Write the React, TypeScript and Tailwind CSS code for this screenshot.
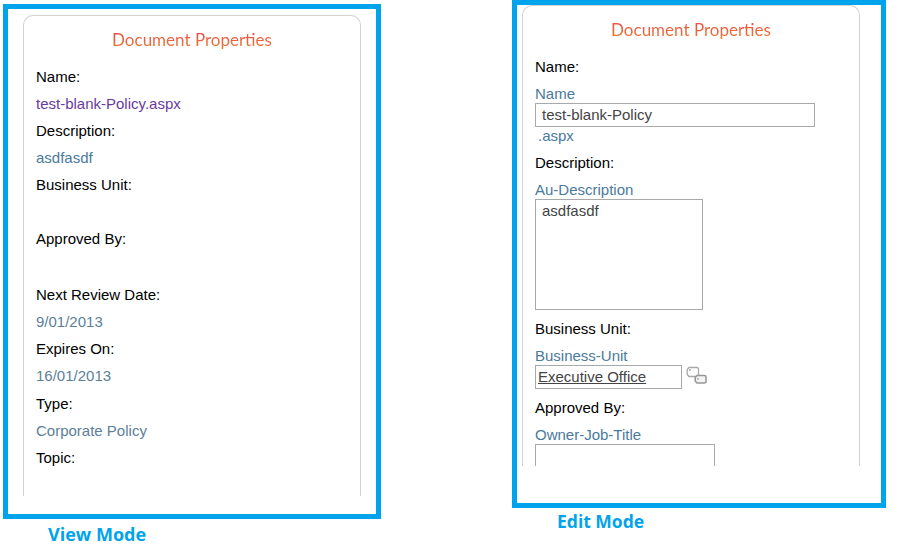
const sans = "font-['Liberation_Sans',Arial,sans-serif]";

function Label({ children }: { children: string }) {
  return <div className="h-[27px] leading-[26px] text-black">{children}</div>;
}

function Value({ children, color = 'text-[#4a7a9c]' }: { children?: string; color?: string }) {
  return <div className={`h-[27px] leading-[26px] ${color}`}>{children}</div>;
}

// caption sits above its field, so the row is shorter than the text line
function Caption({ children }: { children: string }) {
  return <div className="h-[22px] leading-[26px] text-[#4a7a9c]">{children}</div>;
}

function Title() {
  return (
    <h2 className="text-center text-[17px] leading-[24px] font-normal font-['Lato',sans-serif] bg-gradient-to-b from-[#e63f4a] to-[#ee7f22] bg-clip-text text-transparent">
      Document Properties
    </h2>
  );
}

function TagsIcon() {
  return (
    <svg width="21" height="18" viewBox="0 0 21 18" fill="none" className="ml-[4px] mt-[1px]">
      <path d="M3 1.5h8a1.5 1.5 0 0 1 1.5 1.5v6a1.5 1.5 0 0 1-1.5 1.5H3L1.2 8.5V3.5z" stroke="#a8a8a8" strokeWidth="1.3" fill="#fff" />
      <circle cx="4" cy="4" r="1" fill="#a8a8a8" />
      <path d="M11 9.5h7.5a1.5 1.5 0 0 1 1.5 1.5v4.5a1.5 1.5 0 0 1-1.5 1.5H11l-1.8-2v-3.5z" stroke="#989898" strokeWidth="1.6" fill="#f3f3f3" />
      <circle cx="12" cy="13" r="1" fill="#a8a8a8" />
    </svg>
  );
}

function ViewMode() {
  return (
    <div className="ml-[3px] mt-[4px] w-[378px]">
      <div className="h-[515px] border-[5px] border-[#00a4ec] pt-[6px] pl-[15px] bg-white">
        <div className="w-[338px] h-[481px] border border-b-0 border-[#d4d2ce] rounded-t-[10px] pt-[12px] px-[12px]">
          <Title />
          <div className="mt-[12px] text-[15px]">
            <Label>Name:</Label>
            <Value color="text-[#6a3aa0]">test-blank-Policy.aspx</Value>
            <Label>Description:</Label>
            <Value>asdfasdf</Value>
            <Label>Business Unit:</Label>
            <Value />
            <Label>Approved By:</Label>
            <div className="h-[29px]" />
            <Label>Next Review Date:</Label>
            <Value color="text-[#5c7f98]">9/01/2013</Value>
            <Label>Expires On:</Label>
            <Value color="text-[#5c7f98]">16/01/2013</Value>
            <div className="h-[1px]" />
            <Label>Type:</Label>
            <Value color="text-[#5c7f98]">Corporate Policy</Value>
            <Label>Topic:</Label>
          </div>
        </div>
      </div>
      <div className="mt-[2px] pl-[45px] text-[18px] leading-[26px] font-bold text-[#00a4ec] font-['Open_Sans',sans-serif]">
        View Mode
      </div>
    </div>
  );
}

function EditMode() {
  return (
    <div className="ml-[131px] w-[374px]">
      <div className="h-[508px] border-[5px] border-[#00a4ec] pl-[5px] bg-white">
        <div className="w-[338px] h-[461px] overflow-hidden border border-b-0 border-[#d4d2ce] rounded-t-[10px] pt-[12px] px-[12px]">
          <Title />
          <div className="mt-[12px] text-[15px]">
            <Label>Name:</Label>
            <Caption>Name</Caption>
            <div className="w-[280px] h-[24px] border border-[#a9a9a9] pl-[6px] leading-[22px] text-[#444]">test-blank-Policy</div>
            <div className="h-[20px] pl-[3px] leading-[18px] text-[#4a7a9c]">.aspx</div>
            <div className="mt-[3px]"><Label>Description:</Label></div>
            <Caption>Au-Description</Caption>
            <div className="w-[168px] h-[111px] border border-[#a9a9a9] pl-[6px] leading-[22px] text-[#444]">asdfasdf</div>
            <div className="mt-[6px]"><Label>Business Unit:</Label></div>
            <Caption>Business-Unit</Caption>
            <div className="flex items-start">
              <div className="w-[147px] h-[24px] border border-[#a9a9a9] pl-[2px] leading-[22px] text-[#444] underline">Executive Office</div>
              <TagsIcon />
            </div>
            <div className="mt-[6px]"><Label>Approved By:</Label></div>
            <Caption>Owner-Job-Title</Caption>
            <div className="w-[180px] h-[40px] border border-[#a9a9a9]" />
          </div>
        </div>
      </div>
      <div className="pl-[45px] text-[17.5px] leading-[26px] font-bold text-[#00a4ec] font-['Open_Sans',sans-serif]">
        Edit Mode
      </div>
    </div>
  );
}

export default function App() {
  return (
    <div className={`w-[913px] h-[559px] overflow-hidden bg-white flex items-start ${sans}`}>
      <ViewMode />
      <EditMode />
    </div>
  );
}
